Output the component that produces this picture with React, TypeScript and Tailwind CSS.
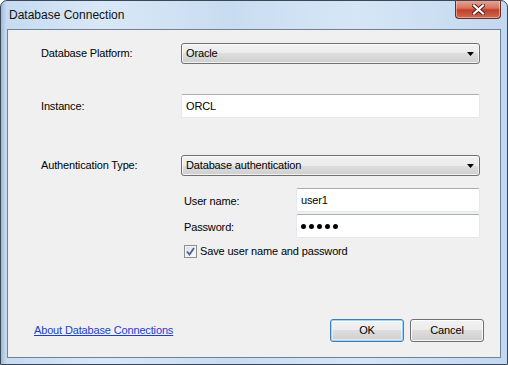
import React from "react"

const font = { fontFamily: '"Liberation Sans", Arial, sans-serif' }

const Arrow = () => (
    <svg width="7" height="4" viewBox="0 0 7 4" className="shrink-0">
        <path d="M0 0H7L3.5 4Z" fill="#000" />
    </svg>
)

const Combo = ({ value }: { value: string }) => (
    <div className="flex-1 h-[21px] flex items-center justify-between pl-[4px] pr-[5px] border border-[#707070] rounded-[3px] bg-[linear-gradient(#f2f2f2_0%,#ebebeb_50%,#dddddd_50%,#cfcfcf_100%)] shadow-[inset_0_0_0_1px_rgba(255,255,255,0.7)] text-[11px] text-black">
        <span>{value}</span>
        <Arrow />
    </div>
)

const TextBox = ({ children }: { children: React.ReactNode }) => (
    <div className="flex-1 h-[24px] flex items-center pl-[4px] bg-white border border-[#e3e9ef] border-t-[#abadb3] rounded-[2px] text-[11px] text-black">
        {children}
    </div>
)

const Button = ({ label, primary }: { label: string; primary?: boolean }) => (
    <div
        className={
            "w-[74px] h-[23px] flex items-center justify-center rounded-[3px] border text-[11px] text-black bg-[linear-gradient(#f2f2f2_0%,#ebebeb_50%,#dddddd_50%,#cfcfcf_100%)] " +
            (primary
                ? "border-[#3c7fb1] shadow-[inset_0_0_0_1px_#9fd5f4,inset_0_0_0_2px_rgba(255,255,255,0.5)]"
                : "border-[#707070] shadow-[inset_0_0_0_1px_rgba(255,255,255,0.8)]")
        }
    >
        {label}
    </div>
)

export default function App() {
    return (
        <div
            style={font}
            className="w-[508px] h-[365px] flex flex-col border border-[#3a4757] rounded-t-[7px] overflow-hidden bg-[linear-gradient(90deg,#9fb9d6_0%,#c6dbf1_1%,#d9e8f7_20%,#c8dcf1_45%,#d6e6f6_70%,#c2d8f0_100%)]"
        >
            {/* Title bar */}
            <div className="h-[28px] flex justify-between">
                <div className="pl-[8px] flex items-center text-[12px] text-[#111]">Database Connection</div>
                <div className="-mt-px mr-[6px] w-[46px] h-[19px] flex items-center justify-center rounded-b-[4px] border border-t-0 border-[#6b2c22] bg-[linear-gradient(#e9a99b_0%,#d7735f_45%,#c2402a_55%,#cf6a4f_100%)] shadow-[inset_0_0_0_1px_rgba(255,220,210,0.5)]">
                    <svg width="13" height="11" viewBox="0 0 13 11">
                        <path d="M2 1.5L11 9.5M11 1.5L2 9.5" stroke="#4a1d17" strokeWidth="4" strokeLinecap="square" />
                        <path d="M2 1.5L11 9.5M11 1.5L2 9.5" stroke="#fff" strokeWidth="2.2" strokeLinecap="square" />
                    </svg>
                </div>
            </div>

            {/* Client area */}
            <div className="mx-[6px] h-[329px] flex flex-col border border-[#6f8195] bg-[#f0f0f0] text-black tracking-[-0.15px]">
                <div className="pl-[33px] pr-[20px] pt-[13px]">
                    <div className="h-[21px] flex items-center">
                        <div className="w-[140px] text-[11px]">Database Platform:</div>
                        <Combo value="Oracle" />
                    </div>

                    <div className="mt-[30px] h-[24px] flex items-center">
                        <div className="w-[140px] text-[11px]">Instance:</div>
                        <TextBox>ORCL</TextBox>
                    </div>

                    <div className="mt-[37px] h-[21px] flex items-center">
                        <div className="w-[140px] text-[11px]">Authentication Type:</div>
                        <Combo value="Database authentication" />
                    </div>

                    <div className="ml-[140px]">
                        <div className="mt-[12px] h-[24px] flex items-center">
                            <div className="w-[115px] pl-[3px] text-[11px] pt-[2px]">User name:</div>
                            <TextBox>user1</TextBox>
                        </div>
                        <div className="mt-[2px] h-[24px] flex items-center">
                            <div className="w-[115px] pl-[3px] text-[11px] pt-[2px]">Password:</div>
                            <TextBox>
                                <div className="flex gap-[3px]">
                                    {[0, 1, 2, 3, 4].map((i) => (
                                        <div key={i} className="w-[5px] h-[5px] rounded-full bg-black" />
                                    ))}
                                </div>
                            </TextBox>
                        </div>
                        <div className="mt-[5px] pl-[3px] flex items-center gap-[3px]">
                            <div className="w-[13px] h-[13px] flex items-center justify-center border border-[#8e8f8f] bg-[linear-gradient(135deg,#dcdcdc,#ffffff)] shadow-[inset_0_0_0_1px_#f4f4f4]">
                                <svg width="9" height="9" viewBox="0 0 9 9">
                                    <path d="M1 4.5L3.5 7.5L8 1" fill="none" stroke="#4a5f97" strokeWidth="1.8" />
                                </svg>
                            </div>
                            <div className="text-[11px]">Save user name and password</div>
                        </div>
                    </div>
                </div>

                {/* Footer */}
                <div className="mt-auto flex items-center justify-between pl-[26px] pr-[16px] pb-[15px]">
                    <span className="text-[11px] text-[#1a3fcc] underline">About Database Connections</span>
                    <div className="flex gap-[6px]">
                        <Button label="OK" primary />
                        <Button label="Cancel" />
                    </div>
                </div>
            </div>
        </div>
    )
}
